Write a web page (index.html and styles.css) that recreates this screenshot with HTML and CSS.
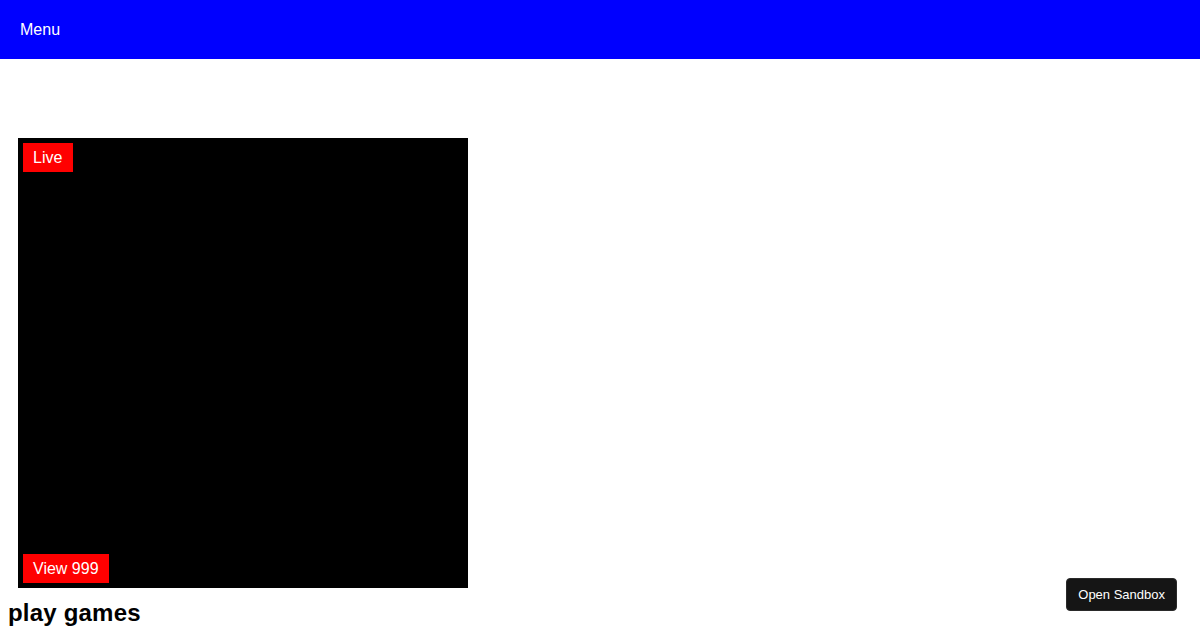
FILE: index.html
```html
<!DOCTYPE html>
<html>
<head>
<meta charset="utf-8">
<link rel="stylesheet" href="styles.css">
</head>
<body>
<header class="topbar"><span class="menu">Menu</span></header>
<main class="content">
  <div class="video">
    <span class="badge badge-live">Live</span>
    <span class="badge badge-views">View 999</span>
  </div>
  <h2 class="title">play games</h2>
</main>
<button class="sandbox-btn">Open Sandbox</button>
</body>
</html>
```
FILE: styles.css
```css
html, body {
  margin: 0;
  padding: 0;
  font-family: "Liberation Sans", Arial, sans-serif;
  background: #ffffff;
}
.topbar {
  height: 59px;
  background: #0000ff;
  display: flex;
  align-items: center;
  padding-left: 20px;
}
.menu {
  color: #ffffff;
  font-size: 16px;
  line-height: 18px;
}
.content {
  padding: 79px 8px 0;
}
.video {
  position: relative;
  width: 450px;
  height: 450px;
  margin-left: 10px;
  background: #000000;
}
.badge {
  position: absolute;
  left: 5px;
  background: #ff0000;
  color: #ffffff;
  font-size: 16px;
  line-height: 19px;
  padding: 5px 10px;
}
.badge-live { top: 5px; padding-right: 11px; }
.badge-views { bottom: 5px; }
.title {
  margin: 11px 0 0;
  font-size: 24px;
  font-weight: bold;
  line-height: 28px;
  letter-spacing: 0.2px;
  color: #000000;
}
.sandbox-btn {
  position: fixed;
  right: 23px;
  bottom: 19px;
  height: 33px;
  padding: 0 11px;
  background: #151515;
  color: #ffffff;
  border: 1px solid #2a2a2a;
  border-radius: 4px;
  font-family: "Liberation Sans", Arial, sans-serif;
  font-size: 13px;
}
```
